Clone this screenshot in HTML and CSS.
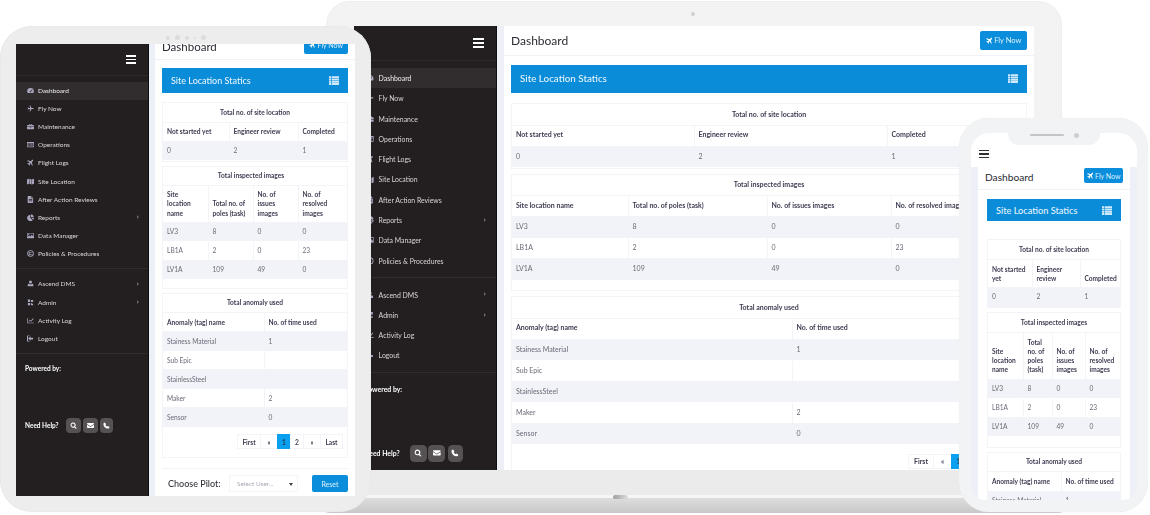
FILE: index.html
```html
<!DOCTYPE html>
<html lang="en">
<head>
<meta charset="utf-8">
<title>Dashboard on devices</title>
<link rel="stylesheet" href="styles.css">
</head>
<body>
<svg class="sprite" aria-hidden="true">
  <symbol id="i-gauge" viewBox="0 0 16 16"><path d="M8 2.5A7.5 7.5 0 0 0 .5 10c0 1.400.4 2.600 1 3.500h13c.6-.9 1-2.100 1-3.500A7.500 7.500 0 0 0 8 2.500zm3.500 2.800 1 .8-3.300 4a1.500 1.500 0 1 1-1-.9z" fill-rule="evenodd"/></symbol>
  <symbol id="i-plane" viewBox="0 0 16 16"><path d="M15.500 8c0-.8-1-1.200-2-1.200h-3L7.200 1H5.700l1.700 5.800H4L2.700 5H1.500l.8 3-.8 3h1.200L4 9.200h3.400L5.700 15h1.500l3.300-5.800h3c1 0 2-.4 2-1.200z"/></symbol>
  <symbol id="i-case" viewBox="0 0 16 16"><path d="M5.500 2h5l1 1v1.500H15a1 1 0 0 1 1 1V8H0V5.500a1 1 0 0 1 1-1h3.500V3zm.5 1v1.500h4V3zM0 9h6.500v1.500h3V9H16v4a1 1 0 0 1-1 1H1a1 1 0 0 1-1-1z" fill-rule="evenodd"/></symbol>
  <symbol id="i-window" viewBox="0 0 16 16"><path d="M1 2h14a1 1 0 0 1 1 1v10a1 1 0 0 1-1 1H1a1 1 0 0 1-1-1V3a1 1 0 0 1 1-1zm.5 3v7.500h13V5zM3 6.500h3V8H3zm4.500 0H13V8H7.500zM3 9.500h3V11H3zm4.500 0H13V11H7.500z" fill-rule="evenodd"/></symbol>
  <symbol id="i-tilt" viewBox="0 0 16 16"><path transform="rotate(-45 8 8)" d="M16 8c0-1-1.200-1.600-2.500-1.600h-3L7.200 0H5.200l1.700 6.400H4L2.700 4.600H1l.9 3.400L1 11.400h1.700L4 9.600h2.900L5.200 16h2l3.300-6.400h3C14.800 9.600 16 9 16 8z"/></symbol>
  <symbol id="i-map" viewBox="0 0 16 16"><path d="M0 3.500 4.500 1.500V13L0 15zM5.500 1.500 10.500 3.500V15L5.500 13zM11.500 3.500 16 1.500V13l-4.500 2z"/></symbol>
  <symbol id="i-file" viewBox="0 0 16 16"><path d="M2.500 0H9v5h5v10a1 1 0 0 1-1 1H2.500a1 1 0 0 1-1-1V1a1 1 0 0 1 1-1zM10 0l4 4h-4zM4 7.500v1.500h8V7.500zm0 3V12h8v-1.500z" fill-rule="evenodd"/></symbol>
  <symbol id="i-pie" viewBox="0 0 16 16"><path d="M7.500 1.500v7.500L13 14.500A7.500 7.500 0 1 1 7.500 1.500zM9 .5A7 7 0 0 1 15.500 7H9zM9.500 8.500H16a7.500 7.500 0 0 1-2 4.700z"/></symbol>
  <symbol id="i-image" viewBox="0 0 16 16"><path d="M1 2h14a1 1 0 0 1 1 1v10a1 1 0 0 1-1 1H1a1 1 0 0 1-1-1V3a1 1 0 0 1 1-1zm.5 1.500v8l3.500-3.500 2.500 2.500 3.500-4.500 3.500 4v-6.500zM4 4.500a1.500 1.500 0 1 1 0 3 1.500 1.500 0 0 1 0-3z" fill-rule="evenodd"/></symbol>
  <symbol id="i-copy" viewBox="0 0 16 16"><path d="M8 .5a7.500 7.500 0 1 1 0 15 7.500 7.500 0 0 1 0-15zm0 2a5.500 5.500 0 1 0 0 11 5.500 5.500 0 0 0 0-11zm0 2c1.300 0 2.300.5 3 1.400l-1.200 1A2.300 2.300 0 0 0 8 6a2 2 0 0 0 0 4c.8 0 1.400-.3 1.800-.9l1.200 1A3.700 3.700 0 1 1 8 4.500z" fill-rule="evenodd"/></symbol>
  <symbol id="i-user" viewBox="0 0 16 16"><path d="M8 1a3.500 3.500 0 1 1 0 7 3.500 3.500 0 0 1 0-7zM3.500 8.500 6 9.500h4l2.500-1c1.300.5 2 2 2 3.500v2.500h-13V12c0-1.500.7-3 2-3.500z"/></symbol>
  <symbol id="i-admin" viewBox="0 0 16 16"><path d="M2 1h5v6H2zM9 2h5v5H9zM2 9h5v5H2zM9 9h2v2h3v3H9z"/></symbol>
  <symbol id="i-chart" viewBox="0 0 16 16"><path d="M0 2h1.500v11H16v1.500H0zM3 10l3.500-4 2.500 2.500L13.500 3l1.500 1.300L9.200 11 6.500 8.300 4.200 11z"/></symbol>
  <symbol id="i-signin" viewBox="0 0 16 16"><path d="M8 3l5 5-5 5v-3H2V6h6zM10 1h4a2 2 0 0 1 2 2v10a2 2 0 0 1-2 2h-4v-1.500h3.500V2.500H10z" transform="matrix(-1 0 0 1 16 0)"/></symbol>
  <symbol id="i-search" viewBox="0 0 16 16"><path d="M7 1a6 6 0 0 1 4.800 9.600l3.600 3.600-1.700 1.700-3.600-3.600A6 6 0 1 1 7 1zm0 2.400a3.600 3.600 0 1 0 0 7.200 3.600 3.600 0 0 0 0-7.200z" fill-rule="evenodd"/></symbol>
  <symbol id="i-mail" viewBox="0 0 16 16"><path d="M1.500 2.500h13A1.500 1.500 0 0 1 16 4v.5L8 9.500 0 4.500V4a1.500 1.500 0 0 1 1.500-1.500zM0 6.300l8 5 8-5V12a1.500 1.500 0 0 1-1.500 1.500h-13A1.500 1.500 0 0 1 0 12z"/></symbol>
  <symbol id="i-phone" viewBox="0 0 16 16"><path d="M4.500 1 7 5 5.500 6.800c.8 1.700 2 2.900 3.700 3.700L11 9l4 2.500c-.2 2-1.500 3.500-3.500 3.500C6 15 1 10 1 4.500 1 2.500 2.500 1.200 4.500 1z"/></symbol>
  <symbol id="i-list" viewBox="0 0 16 14"><path d="M0 0h3.500v3H0zM4.500 0H16v3H4.500zM0 3.700h3.500v3H0zM4.500 3.700H16v3H4.500zM0 7.400h3.500v3H0zM4.500 7.400H16v3H4.500zM0 11h3.500v3H0zM4.500 11H16v3H4.500z"/></symbol>
</svg>

<div class="stage">

  <section class="laptop">
    <div class="laptop-base"><span class="hinge"></span></div>
    <div class="lid">
      <span class="lens"></span>
      <div class="screen">
        <aside class="side side-large">
          <div class="side-top"><span class="burger"><i></i><i></i><i></i></span></div>
          <ul class="nav">
            <li class="on"><svg class="ico"><use href="#i-gauge"/></svg>Dashboard</li>
            <li><svg class="ico"><use href="#i-plane"/></svg>Fly Now</li>
            <li><svg class="ico"><use href="#i-case"/></svg>Maintenance</li>
            <li><svg class="ico"><use href="#i-window"/></svg>Operations</li>
            <li><svg class="ico"><use href="#i-tilt"/></svg>Flight Logs</li>
            <li><svg class="ico"><use href="#i-map"/></svg>Site Location</li>
            <li><svg class="ico"><use href="#i-file"/></svg>After Action Reviews</li>
            <li><svg class="ico"><use href="#i-pie"/></svg>Reports<b class="more"></b></li>
            <li><svg class="ico"><use href="#i-image"/></svg>Data Manager</li>
            <li><svg class="ico"><use href="#i-copy"/></svg>Policies &amp; Procedures</li>
          </ul>
          <ul class="nav nav-line">
            <li><svg class="ico"><use href="#i-user"/></svg>Ascend DMS<b class="more"></b></li>
            <li><svg class="ico"><use href="#i-admin"/></svg>Admin<b class="more"></b></li>
            <li><svg class="ico"><use href="#i-chart"/></svg>Activity Log</li>
            <li><svg class="ico"><use href="#i-signin"/></svg>Logout</li>
          </ul>
          <div class="side-foot">
            <p class="powered">Powered by:</p>
            <div class="help">
              <span>Need Help?</span>
              <a class="hbtn"><svg><use href="#i-search"/></svg></a>
              <a class="hbtn"><svg><use href="#i-mail"/></svg></a>
              <a class="hbtn hbtn-small"><svg><use href="#i-phone"/></svg></a>
            </div>
          </div>
        </aside>
        <main class="main">
          <header class="head"><h1>Dashboard</h1><a class="fly"><svg><use href="#i-tilt"/></svg>Fly Now</a></header>
          <div class="body">
            <div class="banner"><span>Site Location Statics</span><svg><use href="#i-list"/></svg></div>
            <div class="card">
              <table class="t1">
                <colgroup><col class="a"><col class="b"><col class="c"></colgroup>
                <tr><th colspan="3" class="title">Total no. of site location</th></tr>
                <tr><th>Not started yet</th><th>Engineer review</th><th>Completed</th></tr>
                <tr class="odd"><td>0</td><td>2</td><td>1</td></tr>
              </table>
            </div>
            <div class="card card-pad">
              <table class="t2">
                <colgroup><col class="a"><col class="b"><col class="c"><col class="d"></colgroup>
                <tr><th colspan="4" class="title">Total inspected images</th></tr>
                <tr><th>Site location name</th><th>Total no. of poles (task)</th><th>No. of issues images</th><th>No. of resolved images</th></tr>
                <tr class="odd"><td>LV3</td><td>8</td><td>0</td><td>0</td></tr>
                <tr><td>LB1A</td><td>2</td><td>0</td><td>23</td></tr>
                <tr class="odd"><td>LV1A</td><td>109</td><td>49</td><td>0</td></tr>
              </table>
            </div>
            <div class="card card-pager">
              <table class="t3">
                <colgroup><col class="a"><col class="b"></colgroup>
                <tr><th colspan="2" class="title">Total anomaly used</th></tr>
                <tr><th>Anomaly (tag) name</th><th>No. of time used</th></tr>
                <tr class="odd"><td>Stainess Material</td><td>1</td></tr>
                <tr><td>Sub Epic</td><td></td></tr>
                <tr class="odd"><td>StainlessSteel</td><td></td></tr>
                <tr><td>Maker</td><td>2</td></tr>
                <tr class="odd"><td>Sensor</td><td>0</td></tr>
              </table>
              <nav class="pager">
                <a class="w">First</a><a class="n">«</a><a class="cur">1</a><a>2</a><a class="n">»</a><a class="w">Last</a>
              </nav>
            </div>
          </div>
        </main>
      </div>
    </div>
  </section>

  <section class="tablet">
    <div class="dots"><i></i><i class="big"></i><i></i><i class="tiny"></i><i class="big"></i></div>
    <div class="screen">
      <aside class="side">
        <div class="side-top"><span class="burger"><i></i><i></i><i></i></span></div>
        <ul class="nav">
          <li class="on"><svg class="ico"><use href="#i-gauge"/></svg>Dashboard</li>
          <li><svg class="ico"><use href="#i-plane"/></svg>Fly Now</li>
          <li><svg class="ico"><use href="#i-case"/></svg>Maintenance</li>
          <li><svg class="ico"><use href="#i-window"/></svg>Operations</li>
          <li><svg class="ico"><use href="#i-tilt"/></svg>Flight Logs</li>
          <li><svg class="ico"><use href="#i-map"/></svg>Site Location</li>
          <li><svg class="ico"><use href="#i-file"/></svg>After Action Reviews</li>
          <li><svg class="ico"><use href="#i-pie"/></svg>Reports<b class="more"></b></li>
          <li><svg class="ico"><use href="#i-image"/></svg>Data Manager</li>
          <li><svg class="ico"><use href="#i-copy"/></svg>Policies &amp; Procedures</li>
        </ul>
        <ul class="nav nav-line">
          <li><svg class="ico"><use href="#i-user"/></svg>Ascend DMS<b class="more"></b></li>
          <li><svg class="ico"><use href="#i-admin"/></svg>Admin<b class="more"></b></li>
          <li><svg class="ico"><use href="#i-chart"/></svg>Activity Log</li>
          <li><svg class="ico"><use href="#i-signin"/></svg>Logout</li>
        </ul>
        <div class="side-foot">
          <p class="powered">Powered by:</p>
          <div class="help">
            <span>Need Help?</span>
            <a class="hbtn"><svg><use href="#i-search"/></svg></a>
            <a class="hbtn"><svg><use href="#i-mail"/></svg></a>
            <a class="hbtn hbtn-small"><svg><use href="#i-phone"/></svg></a>
          </div>
        </div>
      </aside>
      <main class="main">
        <header class="head"><h1>Dashboard</h1><a class="fly"><svg><use href="#i-tilt"/></svg>Fly Now</a></header>
        <div class="body">
          <div class="banner"><span>Site Location Statics</span><svg><use href="#i-list"/></svg></div>
          <div class="card">
            <table class="t1">
              <colgroup><col class="a"><col class="b"><col class="c"></colgroup>
              <tr><th colspan="3" class="title">Total no. of site location</th></tr>
              <tr><th>Not started yet</th><th>Engineer review</th><th>Completed</th></tr>
              <tr class="odd"><td>0</td><td>2</td><td>1</td></tr>
            </table>
          </div>
          <div class="card card-pad">
            <table class="t2">
              <colgroup><col class="a"><col class="b"><col class="c"><col class="d"></colgroup>
              <tr><th colspan="4" class="title">Total inspected images</th></tr>
              <tr><th>Site location name</th><th>Total no. of poles (task)</th><th>No. of issues images</th><th>No. of resolved images</th></tr>
              <tr class="odd"><td>LV3</td><td>8</td><td>0</td><td>0</td></tr>
              <tr><td>LB1A</td><td>2</td><td>0</td><td>23</td></tr>
              <tr class="odd"><td>LV1A</td><td>109</td><td>49</td><td>0</td></tr>
            </table>
          </div>
          <div class="card card-pager">
            <table class="t3">
              <colgroup><col class="a"><col class="b"></colgroup>
              <tr><th colspan="2" class="title">Total anomaly used</th></tr>
              <tr><th>Anomaly (tag) name</th><th>No. of time used</th></tr>
              <tr class="odd"><td>Stainess Material</td><td>1</td></tr>
              <tr><td>Sub Epic</td><td></td></tr>
              <tr class="odd"><td>StainlessSteel</td><td></td></tr>
              <tr><td>Maker</td><td>2</td></tr>
              <tr class="odd"><td>Sensor</td><td>0</td></tr>
            </table>
            <nav class="pager">
              <a class="w">First</a><a class="n">«</a><a class="cur">1</a><a>2</a><a class="n">»</a><a class="w">Last</a>
            </nav>
          </div>
          <form class="pilot">
            <label>Choose Pilot:</label>
            <span class="select">Select User...<b class="caret"></b></span>
            <a class="reset">Reset</a>
          </form>
        </div>
      </main>
    </div>
  </section>

  <section class="phone">
    <div class="screen">
      <div class="notch"><span class="speaker"></span><span class="cam"></span></div>
      <div class="phone-top"><span class="burger"><i></i><i></i><i></i></span></div>
      <main class="main">
        <header class="head"><h1>Dashboard</h1><a class="fly"><svg><use href="#i-tilt"/></svg>Fly Now</a></header>
        <div class="body">
          <div class="banner"><span>Site Location Statics</span><svg><use href="#i-list"/></svg></div>
          <div class="card">
            <table class="t1">
              <colgroup><col class="a"><col class="b"><col class="c"></colgroup>
              <tr><th colspan="3" class="title">Total no. of site location</th></tr>
              <tr><th>Not started yet</th><th>Engineer review</th><th>Completed</th></tr>
              <tr class="odd"><td>0</td><td>2</td><td>1</td></tr>
            </table>
          </div>
          <div class="card card-pad">
            <table class="t2">
              <colgroup><col class="a"><col class="b"><col class="c"><col class="d"></colgroup>
              <tr><th colspan="4" class="title">Total inspected images</th></tr>
              <tr><th>Site location name</th><th>Total no. of poles (task)</th><th>No. of issues images</th><th>No. of resolved images</th></tr>
              <tr class="odd"><td>LV3</td><td>8</td><td>0</td><td>0</td></tr>
              <tr><td>LB1A</td><td>2</td><td>0</td><td>23</td></tr>
              <tr class="odd"><td>LV1A</td><td>109</td><td>49</td><td>0</td></tr>
            </table>
          </div>
          <div class="card">
            <table class="t3">
              <colgroup><col class="a"><col class="b"></colgroup>
              <tr><th colspan="2" class="title">Total anomaly used</th></tr>
              <tr><th>Anomaly (tag) name</th><th>No. of time used</th></tr>
              <tr class="odd"><td>Stainess Material</td><td>1</td></tr>
            </table>
          </div>
        </div>
      </main>
    </div>
  </section>

</div>
</body>
</html>
```

FILE: styles.css
```css
* { box-sizing: border-box; }
html, body { margin: 0; padding: 0; background: #fff; }
body { font-family: Lato, "Open Sans", sans-serif; color: #3c3c52; overflow: hidden; }
.sprite { position: absolute; width: 0; height: 0; }

.stage { position: relative; width: 1150px; height: 515px; overflow: hidden; background: #fff; }
.laptop, .tablet, .phone { position: absolute; filter: blur(.3px); }

/* ---------- device shells ---------- */
.laptop { left: 313px; top: 1px; width: 762px; height: 513px; }
.lid {
  position: relative; width: 736px; height: 494px; margin: 0 13px;
  background: linear-gradient(#f3f3f3 0, #f2f2f2 94%, #ebebeb 94.1%);
  border-radius: 24px 24px 0 0; border: 1px solid #eeeeee; border-bottom: 0;
  padding: 24px 27px 0 27px;
}
.lens { position: absolute; left: 364px; top: 10px; width: 4px; height: 4px; border-radius: 50%; background: #d0d0d0; }
.laptop-base {
  position: absolute; left: 0; right: 0; top: 493px; height: 19px;
  background: linear-gradient(#f6f6f6 0, #f6f6f6 22%, #dcdcdc 23%, #c8c8c8 100%);
  border-radius: 0 0 18px 18px;
}
.hinge { position: absolute; left: 300px; top: 1px; width: 15px; height: 4px; background: linear-gradient(90deg, #9d9d9d, #dedede); border-radius: 2px; }

.tablet { left: 0; top: 26px; width: 371px; height: 486px; background: #ededed; border-radius: 32px; padding: 18px 16px 16px; box-shadow: inset 0 0 0 1px #e9e9e9; }
.dots { position: absolute; left: 166px; top: 9px; display: flex; align-items: center; gap: 5px; }
.dots i { width: 4px; height: 4px; border-radius: 50%; background: #dcdcdc; }
.dots .big { width: 5px; height: 5px; }
.dots .tiny { width: 2px; height: 2px; }

.phone { left: 959px; top: 118px; width: 189px; height: 394px; background: #f2f3f4; border-radius: 30px; padding: 15px 11px 12px 12px; box-shadow: 0 0 1px #dddddd; }
.phone .screen { position: relative; flex-direction: column; border-radius: 18px 18px 14px 14px; }
.notch { position: absolute; left: 37px; top: 0; width: 92px; height: 12px; background: #f2f3f4; border-radius: 0 0 11px 11px; z-index: 2; }
.speaker { position: absolute; left: 22px; top: 1px; width: 34px; height: 2px; background: #c4c4c4; border-radius: 1px; }
.cam { position: absolute; left: 66px; top: 0; width: 5px; height: 5px; background: #cfcfcf; border-radius: 50%; }
.phone-top { height: 34px; background: #fff; display: flex; align-items: center; padding: 8px 0 0 8px; flex: none; }

.screen { display: flex; width: 100%; height: 100%; overflow: hidden; background: #eef0f7; }
.laptop .screen { height: 444px; }

/* ---------- sidebar ---------- */
.side { flex: none; width: 133px; height: 100%; background: #231f20; border-right: 1px solid #0e0c0d; color: #d9d6dc; font-size: 6.500px; display: flex; flex-direction: column; }
.side-large { zoom: 1.12; width: 127.700px; font-size: 6.150px; }
.side-top { height: 31.500px; flex: none; display: flex; align-items: center; justify-content: flex-end; padding-right: 12px; border-bottom: 1px solid #2f2b2c; }
.side-large .side-top { padding-right: 11px; }
.burger { display: flex; flex-direction: column; gap: 2px; width: 10px; }
.burger i { display: block; height: 1.500px; background: #fff; }
.phone-top .burger { width: 10px; }
.phone-top .burger i { background: #333; height: 1.200px; }
.nav { list-style: none; margin: 0; padding: 6px 0; flex: none; }
.nav + .nav { padding-top: 5.500px; }
.nav li { position: relative; height: 18.100px; display: flex; align-items: center; padding-left: 11px; white-space: nowrap; }
.nav li.on { background: #312d2e; color: #f0eef2; }
.nav-line { border-top: 1px solid #302c2d; border-bottom: 1px solid #302c2d; }
.ico { width: 7px; height: 7px; margin-right: 4px; fill: #aaa6bd; flex: none; }
.more { position: absolute; right: 9px; top: 7px; border-left: 2px solid #6b6769; border-top: 2px solid transparent; border-bottom: 2px solid transparent; }
.side-foot { padding: 9px 0 0 9px; flex: none; }
.powered { margin: 0; line-height: 11px; font-weight: 700; color: #fff; }
.help { display: flex; align-items: center; margin-top: 44px; font-weight: 700; color: #fff; }
.help span { width: 41px; flex: none; }
.hbtn { width: 15px; height: 15px; margin-right: 1.500px; border-radius: 4px; background: #565152; display: flex; align-items: center; justify-content: center; flex: none; }
.hbtn svg { width: 7px; height: 7px; fill: #fff; }
.hbtn-small { width: 13px; margin-left: 1px; }

/* ---------- main ---------- */
.main { flex: 1; min-width: 0; background: #fff; margin-left: 7px; --row: 19px; --fs: 6.600px; --thpad: 4px; }
.head { display: flex; justify-content: space-between; align-items: center; padding: 0 7px; border-bottom: 1px solid #f1f2f7; }
.head h1 { margin: 0; font-weight: 400; color: #2b2b33; white-space: nowrap; }
.fly { display: flex; align-items: center; justify-content: center; background: #0a8ddb; color: #dff1fb; border-radius: 2px; white-space: nowrap; }
.fly svg { fill: #fff; width: 7px; height: 7px; margin-right: 1.500px; }
.body { padding: 10px 7px 0; }
.banner { display: flex; align-items: center; justify-content: space-between; background: #0a8cd9; color: #e4f3fc; font-weight: 500; }
.banner svg { fill: #cfe9f8; width: 10px; height: 9px; }
.card { border: 1px solid #f3f4f8; margin-bottom: 4px; background: #fff; }
.card-pad { padding-bottom: 8px; }
.card table { width: 100%; border-collapse: collapse; table-layout: fixed; font-size: var(--fs); }
.card th, .card td { height: var(--row); padding: 0 4px; text-align: left; line-height: 9.300px; border: 1px solid #f3f4f8; border-width: 0 1px 1px 0; }
.card th:last-child, .card td:last-child { border-right: 0; }
.card th { color: #3c3c52; font-weight: 700; vertical-align: bottom; padding-top: 4px; padding-bottom: var(--thpad); }
.card td { color: #6a6a78; vertical-align: middle; }
.card th.title { text-align: center; vertical-align: middle; padding-top: 0; padding-bottom: 0; }
.odd td { background: #f1f3f8; border-color: transparent; }

.pager { display: flex; justify-content: flex-end; font-size: var(--fs); font-weight: 700; color: #3c3c52; padding: 7px 4px 8px 0; }
.pager a { height: 15px; min-width: 13px; display: flex; align-items: center; justify-content: center; border: 1px solid #f3f4f8; border-right: 0; background: #fff; }
.pager .w { width: 23px; }
.pager .n { width: 17px; }
.pager .cur { background: #0b9ff0; color: #233a50; border-color: #0b9ff0; }
.pager a:last-child { border-right: 1px solid #f3f4f8; }

.pilot { display: flex; align-items: center; margin-top: 10px; padding: 6px 0 0 6px; border-top: 1px solid #f3f4f8; }
.pilot label { width: 61px; flex: none; font-size: 9px; font-weight: 500; color: #33333d; }
.select { position: relative; width: 69px; height: 17px; flex: none; padding-left: 7px; display: flex; align-items: center; font-size: 6.500px; color: #a8a8b4; border: 1px solid #f3f4f8; background: #fff; }
.caret { position: absolute; right: 4px; top: 7px; border-top: 3px solid #444; border-left: 2px solid transparent; border-right: 2px solid transparent; }
.reset { margin-left: auto; width: 36px; height: 17px; display: flex; align-items: center; justify-content: center; background: #0a8ddb; color: #dff1fb; font-size: 7px; border-radius: 2px; }

/* ---------- laptop sizes ---------- */
.laptop .main { --row: 21px; --fs: 7px; --thpad: 6px; }
.laptop .head { height: 30px; }
.laptop .head h1 { font-size: 12px; }
.laptop .fly { width: 47px; height: 19px; font-size: 7.500px; }
.laptop .body { padding-top: 9px; }
.laptop .banner { height: 28px; padding: 0 9px 2px; font-size: 9.800px; margin-bottom: 10px; }
.laptop .card { margin-bottom: 5px; }
.laptop .card-pad { padding-bottom: 10px; }
.laptop .pager { padding-top: 9px; }
.laptop .pager a { min-width: 14px; }
.laptop .pager .w { width: 25px; }
.laptop .pager .n { width: 18px; }
.laptop .t1 .a { width: 182px; } .laptop .t1 .b { width: 193px; }
.laptop .t2 .a { width: 116px; } .laptop .t2 .b { width: 139px; } .laptop .t2 .c { width: 124px; }
.laptop .t3 .a { width: 280px; }

/* ---------- tablet sizes ---------- */
.tablet .main { margin-left: 6px; }
.tablet .head { height: 16px; align-items: flex-end; padding-bottom: 5px; }
.tablet .head h1 { font-size: 11.500px; line-height: 14px; align-self: flex-start; margin-top: -4px; }
.tablet .fly { width: 44px; height: 19px; font-size: 7px; flex: none; }
.tablet .body { padding-top: 8px; }
.tablet .banner { height: 25px; padding: 0 9px; font-size: 9px; margin-bottom: 9px; }
.tablet .t1 .a { width: 66px; } .tablet .t1 .b { width: 69px; }
.tablet .t2 .a { width: 45px; } .tablet .t2 .b { width: 45px; } .tablet .t2 .c { width: 45px; }
.tablet .t2 th:first-child { padding-right: 12px; }
.tablet .t3 .a { width: 101px; }

/* ---------- phone sizes ---------- */
.phone .main { flex: 1; margin: 0 7px; }
.phone .card th { padding-top: 5px; }
.phone .card th.title { padding-top: 0; }
.phone .head { height: 23px; padding: 0 7px; }
.phone .head h1 { font-size: 10.200px; margin-top: -3px; }
.phone .fly { width: 39px; height: 15px; font-size: 7px; margin-top: -5px; }
.phone .body { padding: 9px 9px 0; }
.phone .banner { height: 22px; padding: 0 9px; font-size: 9.200px; margin-bottom: 18px; }
.phone .card-pad { padding-bottom: 10px; }
.phone .t1 .a { width: 44px; } .phone .t1 .b { width: 48px; }
.phone .t2 .a { width: 35px; } .phone .t2 .b { width: 29px; } .phone .t2 .c { width: 33px; }
.phone .t3 .a { width: 73px; }
```
